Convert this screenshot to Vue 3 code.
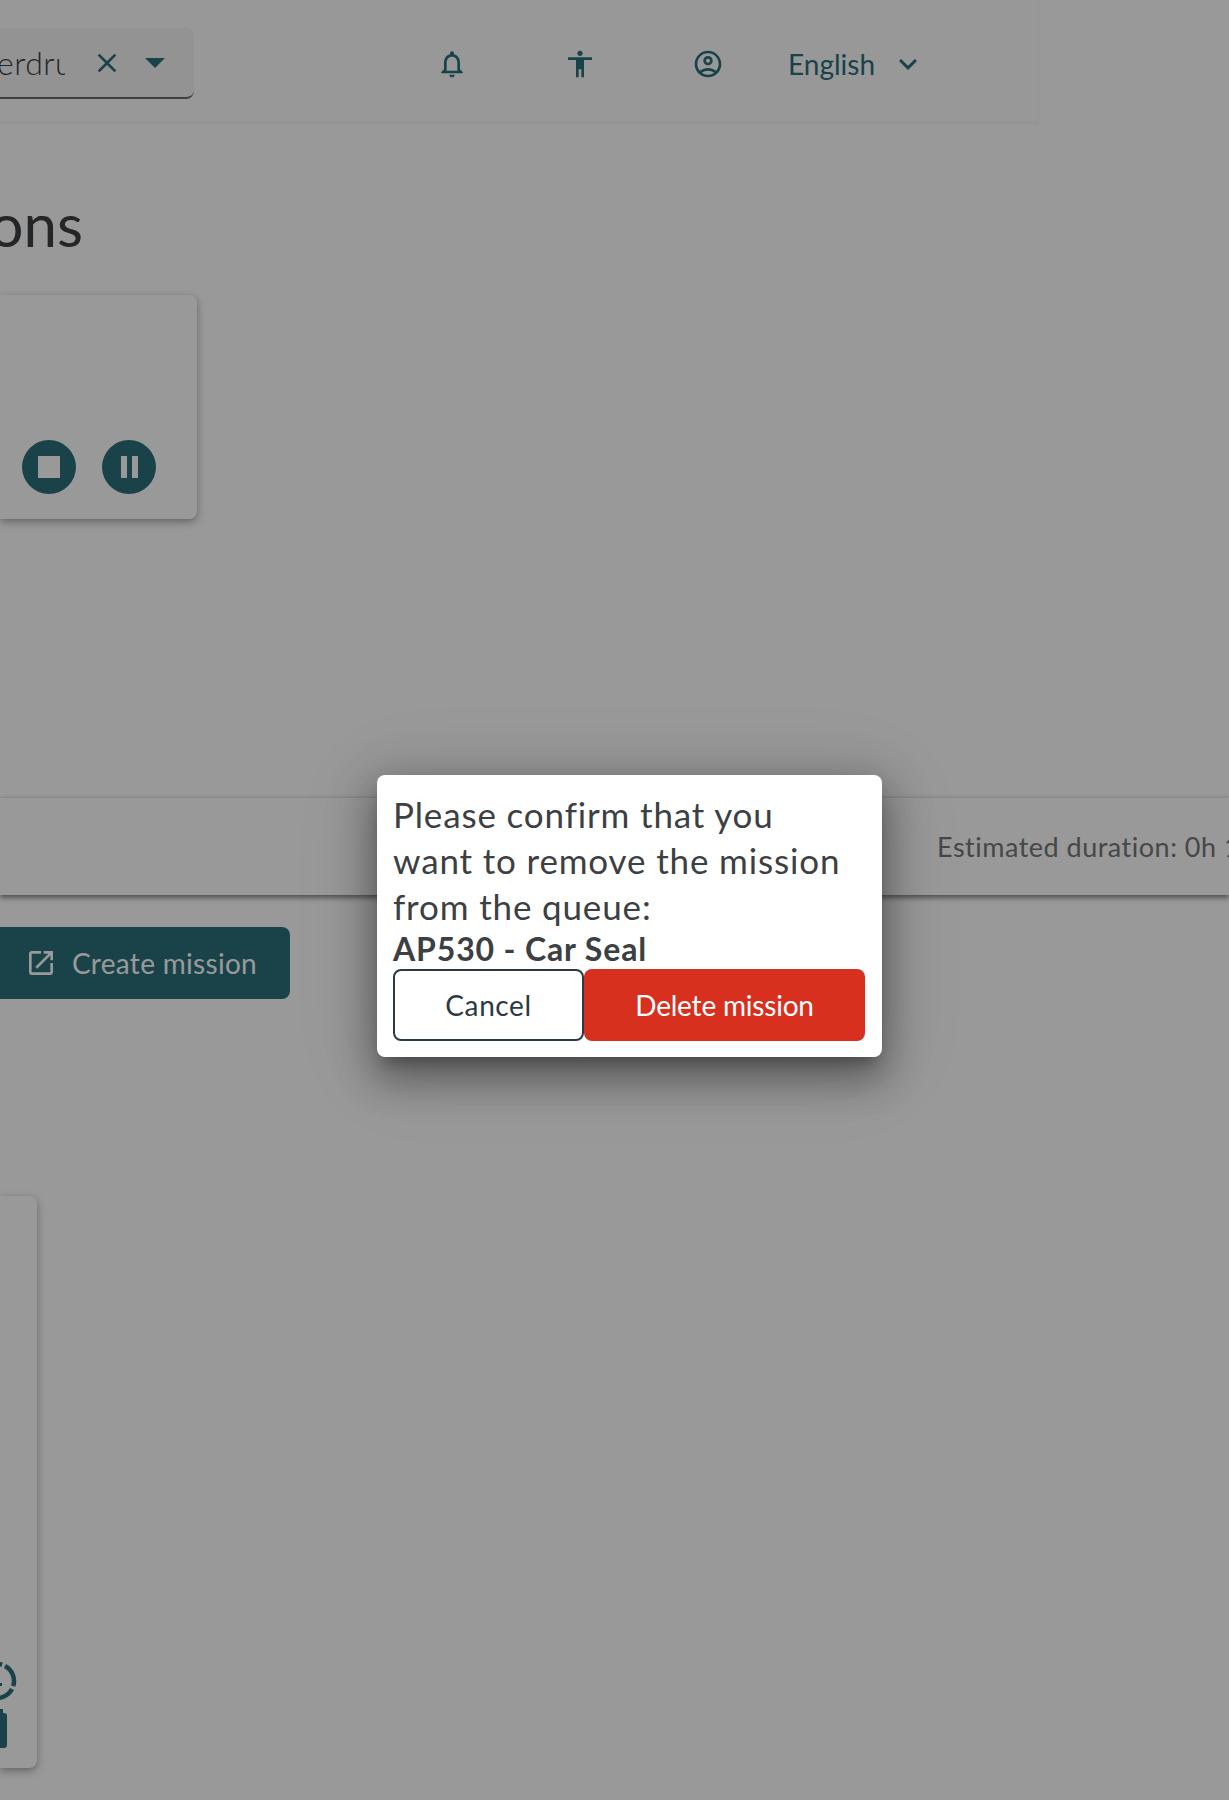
<template>
  <div class="page">
    <header class="topbar">
      <div class="site-select">
        <span class="site-name"><span>erdrup</span></span>
        <svg class="clear" viewBox="0 0 24 24"><path d="M19 6.41 17.59 5 12 10.59 6.41 5 5 6.41 10.59 12 5 17.59 6.41 19 12 13.41 17.59 19 19 17.59 13.41 12z" /></svg>
        <span class="caret"></span>
      </div>
      <nav class="top-actions">
        <svg class="top-icon" viewBox="0 0 24 24"><path :d="icons.bell" /></svg>
        <svg class="top-icon" viewBox="0 0 24 24"><path :d="icons.person" /></svg>
        <svg class="top-icon" viewBox="0 0 24 24"><path :d="icons.account" /></svg>
        <span class="lang">English</span>
        <svg class="chevron" viewBox="0 0 24 24"><path d="M7.41 8.59 12 13.17l4.59-4.58L18 10l-6 6-6-6z" /></svg>
      </nav>
    </header>

    <h1 class="title"><span>Missions</span></h1>

    <section class="active-card">
      <button class="round"><span class="stop"></span></button>
      <button class="round"><span class="pause"></span><span class="pause"></span></button>
    </section>

    <div class="queue-bar">
      <span class="duration">Estimated duration: 0h 15m</span>
    </div>

    <div class="create-row">
      <button class="create">
        <svg viewBox="0 0 24 24"><path d="M19 19H5V5h7V3H5c-1.11 0-2 .9-2 2v14c0 1.1.89 2 2 2h14c1.1 0 2-.9 2-2v-7h-2v7zM14 3v2h3.59l-9.83 9.83 1.41 1.41L19 6.41V10h2V3h-7z" /></svg>
        Create mission
      </button>
    </div>

    <section class="mission-card">
      <svg class="ring" viewBox="0 0 40 40">
        <circle cx="20" cy="20" r="17" pathLength="100" transform="rotate(-62 20 20)" />
      </svg>
      <span class="dot"></span>
      <span class="stem"></span>
      <span class="block"></span>
    </section>

    <div class="overlay"></div>

    <div class="dialog">
      <p class="message">Please confirm that you want to remove the mission from the queue:</p>
      <p class="mission-name">AP530 - Car Seal</p>
      <div class="dialog-actions">
        <button class="cancel">Cancel</button>
        <button class="delete">Delete mission</button>
      </div>
    </div>
  </div>
</template>

<script setup>
const icons = {
  bell: 'M12 22c1.1 0 2-.9 2-2h-4c0 1.1.9 2 2 2zm6-6v-5c0-3.07-1.63-5.64-4.5-6.32V4c0-.83-.67-1.5-1.5-1.5s-1.5.67-1.5 1.5v.68C7.64 5.36 6 7.92 6 11v5l-2 2v1h16v-1l-2-2zm-2 1H8v-6c0-2.48 1.51-4.5 4-4.5s4 2.02 4 4.5v6z',
  person: 'M12 2c1.1 0 2 .9 2 2s-.9 2-2 2-2-.9-2-2 .9-2 2-2zm9 7h-6v13h-2v-6h-2v6H9V9H3V7h18v2z',
  account: 'M12 2C6.48 2 2 6.48 2 12s4.48 10 10 10 10-4.48 10-10S17.52 2 12 2zM7.35 18.5C8.66 17.56 10.26 17 12 17s3.34.56 4.65 1.5c-1.31.94-2.91 1.5-4.65 1.5s-3.34-.56-4.65-1.5zm10.79-1.38C16.45 15.8 14.32 15 12 15s-4.45.8-6.14 2.12C4.7 15.73 4 13.95 4 12c0-4.42 3.58-8 8-8s8 3.58 8 8c0 1.95-.7 3.73-1.86 5.12zM12 6c-1.93 0-3.5 1.57-3.5 3.5S10.07 13 12 13s3.5-1.57 3.5-3.5S13.93 6 12 6zm0 5c-.83 0-1.5-.67-1.5-1.5S11.17 8 12 8s1.5.67 1.5 1.5S12.83 11 12 11z'
}
</script>

<style>
body {
  margin: 0;
  background: #fff;
}
</style>

<style scoped>
.page {
  position: relative;
  width: 1229px;
  height: 1800px;
  overflow: hidden;
  background: #fff;
  font-family: Lato, "Liberation Sans", sans-serif;
  color: #3c4043;
}

button {
  font-family: inherit;
  cursor: pointer;
}

.topbar {
  display: flex;
  align-items: center;
  box-sizing: border-box;
  width: 1039px;
  height: 125px;
  padding-top: 6px;
  background: #fdfdfd;
  border-right: 1px solid #f7f7f7;
  border-bottom: 4px solid #f8f8f8;
}

.site-select {
  display: flex;
  align-items: center;
  box-sizing: border-box;
  width: 194px;
  height: 71px;
  background: #f5f5f5;
  border-bottom: 2px solid #6b6b6b;
  border-radius: 0 8px 8px 0;
}

.site-name {
  width: 65px;
  overflow: hidden;
  font-size: 32px;
  font-weight: 300;
  letter-spacing: 0.5px;
  white-space: nowrap;
}

.site-name span {
  margin-left: -3px;
}

.clear {
  width: 32px;
  height: 32px;
  margin-left: 26px;
  fill: #2a707b;
}

.caret {
  margin-left: 22px;
  border-top: 10px solid #2a707b;
  border-left: 10px solid transparent;
  border-right: 10px solid transparent;
}

.top-actions {
  display: flex;
  align-items: center;
  margin-left: 242px;
  color: #2a707b;
}

.top-icon {
  width: 32px;
  height: 32px;
  margin-right: 96px;
  fill: #2a707b;
}

.top-icon:nth-child(3) {
  margin-right: 64px;
}

.lang {
  font-size: 28px;
}

.chevron {
  width: 36px;
  height: 36px;
  margin-left: 15px;
  fill: #2a707b;
}

.title {
  display: flex;
  justify-content: flex-end;
  width: 83px;
  height: 90px;
  margin: 54px 0 0;
  font-size: 60px;
  line-height: 90px;
  font-weight: 400;
  white-space: nowrap;
}

.active-card {
  display: flex;
  align-items: flex-end;
  justify-content: flex-end;
  gap: 26px;
  box-sizing: border-box;
  width: 197px;
  height: 224px;
  margin-top: 26px;
  padding: 0 41px 25px 0;
  border-radius: 0 8px 8px 0;
  box-shadow: 0 3px 8px rgba(0, 0, 0, 0.35);
}

.round {
  display: flex;
  align-items: center;
  justify-content: center;
  gap: 5px;
  width: 54px;
  height: 54px;
  padding: 0;
  border: 0;
  border-radius: 50%;
  background: #2a707b;
}

.stop {
  width: 22px;
  height: 22px;
  background: #fff;
}

.pause {
  width: 6px;
  height: 22px;
  background: #fff;
}

.queue-bar {
  display: flex;
  align-items: center;
  height: 97px;
  margin-top: 279px;
  padding-left: 937px;
  box-shadow: 0 3px 5px rgba(0, 0, 0, 0.45), 0 -1px 4px rgba(0, 0, 0, 0.1);
}

.duration {
  font-size: 27px;
  color: #777;
  letter-spacing: 0.5px;
  white-space: nowrap;
}

.create-row {
  margin-top: 32px;
}

.create {
  display: flex;
  align-items: center;
  justify-content: flex-end;
  gap: 15px;
  box-sizing: border-box;
  width: 290px;
  height: 72px;
  padding: 0 33px 0 0;
  border: 0;
  border-radius: 0 8px 8px 0;
  background: #2a707b;
  color: #fff;
  font-size: 28px;
  letter-spacing: 0.3px;
}

.create svg {
  width: 32px;
  height: 32px;
  fill: #fff;
}

.mission-card {
  position: relative;
  box-sizing: border-box;
  width: 37px;
  height: 572px;
  margin-top: 197px;
  border-radius: 0 8px 8px 0;
  box-shadow: 0 3px 8px rgba(0, 0, 0, 0.35);
}

.ring {
  position: absolute;
  left: -23px;
  top: 465px;
  width: 40px;
  height: 40px;
}

.ring circle {
  fill: none;
  stroke: #2a707b;
  stroke-width: 4.5;
  stroke-dasharray: 22 3;
}

.dot {
  position: absolute;
  left: 0;
  top: 487px;
  width: 2px;
  height: 3px;
  background: #2a707b;
}

.stem {
  position: absolute;
  left: 0;
  top: 513px;
  width: 3px;
  height: 4px;
  background: #2a707b;
}

.block {
  position: absolute;
  left: 0;
  top: 517px;
  width: 7px;
  height: 35px;
  border-radius: 0 3px 3px 0;
  background: #2a707b;
}

.overlay {
  position: absolute;
  inset: 0;
  background: rgba(0, 0, 0, 0.4);
}

.dialog {
  position: absolute;
  left: 377px;
  top: 775px;
  box-sizing: border-box;
  width: 505px;
  height: 282px;
  padding: 16px;
  border-radius: 8px;
  background: #fff;
  box-shadow: 0 11px 15px -7px rgba(0, 0, 0, 0.3), 0 24px 38px 3px rgba(0, 0, 0, 0.22), 0 9px 46px 8px rgba(0, 0, 0, 0.2), 0 10px 90px 15px rgba(0, 0, 0, 0.05);
}

.message {
  max-width: 455px;
  margin: 0;
  font-size: 35px;
  line-height: 46px;
  letter-spacing: 0.85px;
}

.mission-name {
  margin: 0;
  font-size: 32px;
  line-height: 40px;
  font-weight: 700;
  letter-spacing: 0.85px;
}

.dialog-actions {
  display: flex;
}

.dialog-actions button {
  height: 72px;
  padding: 0;
  border-radius: 8px;
  font-size: 28px;
}

.cancel {
  width: 191px;
  background: #fff;
  border: 2px solid #2b3a42;
  color: #2b3a42;
  letter-spacing: 0.6px;
}

.delete {
  width: 281px;
  background: #d7301f;
  border: 0;
  color: #fff;
  letter-spacing: -0.2px;
}
</style>
